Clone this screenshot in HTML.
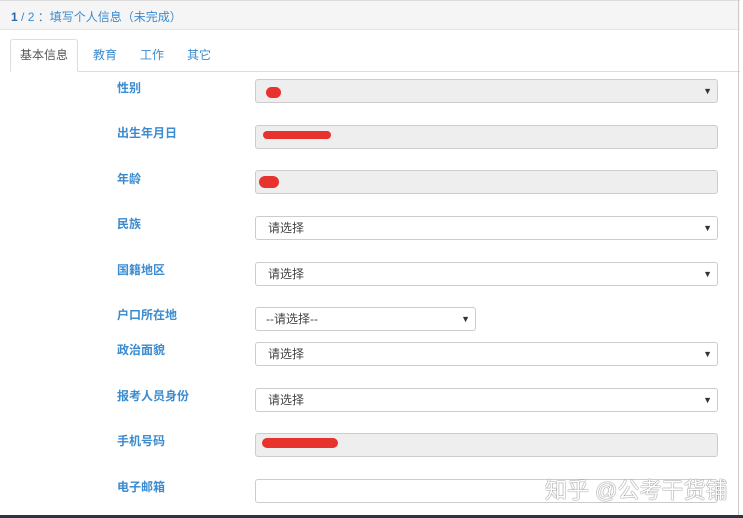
<!DOCTYPE html><html><head><meta charset="utf-8"><style>
body{margin:0;width:743px;height:518px;background:#fff;position:relative;overflow:hidden;font-family:"Liberation Sans","Noto Sans CJK SC",sans-serif;font-size:12px}
.top{position:absolute;left:0;top:0;width:740px;height:30px;background:#f5f5f5;border-top:1px solid #ddd;border-bottom:1px solid #e5e5e5;box-sizing:border-box}
.top span{position:absolute;left:11px;top:7px;color:#3a8bd0}
.tabline{position:absolute;left:10px;top:71px;width:730px;border-top:1px solid #ddd}
.tab{position:absolute;top:46px;color:#3a8bd0}
.act{position:absolute;left:10px;top:39px;width:68px;height:33px;border:1px solid #ddd;border-bottom:1px solid #fff;border-radius:3px 3px 0 0;background:#fff;box-sizing:border-box;color:#555;text-align:center;line-height:31px}
.lb{position:absolute;left:117px;color:#3a8bd0;font-weight:bold;font-size:12px}
.f{position:absolute;left:255px;width:463px;height:24px;border:1px solid #ccc;border-radius:3px;box-sizing:border-box;background:#fff;color:#444;line-height:22px;padding-left:12px}
.g{background:#eee}
.f b{position:absolute;right:5px;top:0;font-size:9px;color:#333;font-weight:normal}
.r{position:absolute;background:#e8322e;border-radius:6px}
.rt{position:absolute;right:4px;top:0;width:1px;height:518px;background:#ccc}
.bot{position:absolute;left:0;bottom:0;width:743px;height:3px;background:#2e3440}
.wm{position:absolute;left:545px;top:473px;font-size:22px;color:#fff;text-shadow:0 0 1px #666,0 0 1px #666}
</style></head><body>
<div class="top"><span><b style="color:#2a6aa8">1</b> / 2 ：填写个人信息（未完成）</span></div>
<div class="tabline"></div>
<div class="act">基本信息</div>
<div class="tab" style="left:93px">教育</div>
<div class="tab" style="left:140px">工作</div>
<div class="tab" style="left:187px">其它</div>
<div class="lb" style="top:79px">性别</div><div class="f g" style="top:79px"><b>▼</b></div><div class="r" style="left:266px;top:87px;width:15px;height:11px"></div>
<div class="lb" style="top:124px">出生年月日</div><div class="f g" style="top:125px"></div><div class="r" style="left:263px;top:131px;width:68px;height:8px"></div>
<div class="lb" style="top:170px">年龄</div><div class="f g" style="top:170px"></div><div class="r" style="left:259px;top:176px;width:20px;height:12px"></div>
<div class="lb" style="top:215px">民族</div><div class="f" style="top:216px">请选择<b>▼</b></div>
<div class="lb" style="top:261px">国籍地区</div><div class="f" style="top:262px">请选择<b>▼</b></div>
<div class="lb" style="top:306px">户口所在地</div><div class="f" style="top:307px;width:221px;padding-left:10px">--请选择--<b>▼</b></div>
<div class="lb" style="top:341px">政治面貌</div><div class="f" style="top:342px">请选择<b>▼</b></div>
<div class="lb" style="top:387px">报考人员身份</div><div class="f" style="top:388px">请选择<b>▼</b></div>
<div class="lb" style="top:432px">手机号码</div><div class="f g" style="top:433px"></div><div class="r" style="left:262px;top:438px;width:76px;height:10px"></div>
<div class="lb" style="top:478px">电子邮箱</div><div class="f" style="top:479px"></div>
<div class="wm">知乎 @公考干货铺</div>
<div class="rt"></div><div class="bot"></div>
</body></html>
